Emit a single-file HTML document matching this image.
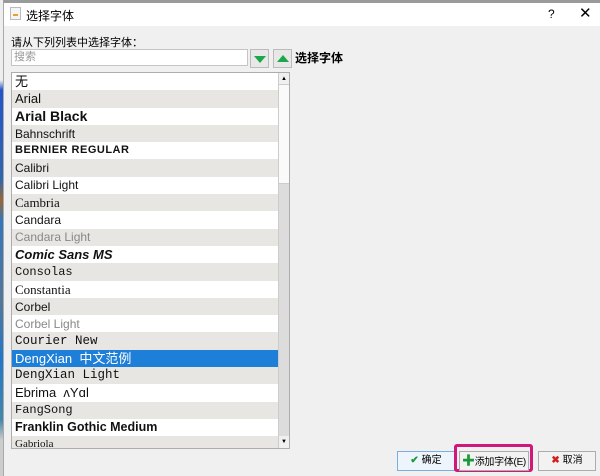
<!DOCTYPE html>
<html><head><meta charset="utf-8"><style>
*{margin:0;padding:0;box-sizing:border-box}
body{width:600px;height:476px;overflow:hidden;background:#f0f0f0;font-family:"Liberation Sans","Noto Sans CJK SC",sans-serif;position:relative}
.strip{position:absolute;left:0;top:0;width:3px;height:476px;background:linear-gradient(#eee 0,#eee 80px,#2255cc 90px,#3366aa 180px,#996633 200px,#3377bb 220px,#557799 300px,#2277cc 360px,#4488aa 420px,#ccc 440px)}
.win{position:absolute;left:3px;top:0;width:597px;height:476px;border-top:3px solid #9a9a9a;border-left:1px solid #aaa;background:#f0f0f0}
.title{position:absolute;left:0;top:0;right:0;height:23px;background:#fff;font-size:12px}
.abs{position:absolute}
.list{position:absolute;left:7px;top:69px;width:279px;height:377px;border:1px solid #adadad;background:#fff;overflow:hidden}
.row{height:17.3px;display:flex;align-items:center;overflow:hidden;padding-left:3px;font-size:13px;color:#111;white-space:nowrap;width:266px;line-height:1}
.row:nth-child(even){background:#e8e6e3}
.sel{background:#1e7fd8!important;color:#fff!important}
.sb{position:absolute;left:266px;top:0;width:11px;height:375px;background:#dcdcdc;border-left:1px solid #ccc}
.btn{position:absolute;top:448px;height:20px;border:1px solid #acacac;background:#f2f2f2;font-size:10px;line-height:18px;text-align:center;white-space:nowrap}
</style></head><body>
<div class="strip"></div>
<div class="win">
 <div class="title">
  <div class="abs" style="left:6px;top:4px;width:11px;height:13px;border:1px solid #bbb;background:#f5f5f5"><div style="margin:6px 2px 0;height:2px;background:#e8a030"></div></div>
  <div class="abs" style="left:22px;top:4px">选择字体</div>
  <div class="abs" style="left:544px;top:4px;font-size:12px">?</div>
  <div class="abs" style="left:575px;top:1px;font-size:15px">✕</div>
 </div>
 <div class="abs" style="left:7px;top:31px;font-size:11px">请从下列列表中选择字体：</div>
 <div class="abs" style="left:7px;top:46px;width:237px;height:17px;background:#fff;border:1px solid #c4c4c4;font-size:11px;color:#999;padding-left:2px;line-height:15px">搜索</div>
 <div class="abs" style="left:246px;top:46px;width:19px;height:19px;border:1px solid #bbb;background:#e8e8e8"><div style="margin:6px auto 0;width:0;height:0;border-left:6px solid transparent;border-right:6px solid transparent;border-top:7px solid #1ca84a"></div></div>
 <div class="abs" style="left:269px;top:46px;width:19px;height:19px;border:1px solid #bbb;background:#e8e8e8"><div style="margin:5px auto 0;width:0;height:0;border-left:6px solid transparent;border-right:6px solid transparent;border-bottom:7px solid #1ca84a"></div></div>
 <div class="abs" style="left:291px;top:46px;font-size:12px;font-weight:bold">选择字体</div>
 <div class="list">
  <div class="row">无</div>
  <div class="row">Arial</div>
  <div class="row" style="font-weight:900;font-size:14px">Arial Black</div>
  <div class="row" style="font-size:12px">Bahnschrift</div>
  <div class="row" style="font-weight:bold;font-size:11px;letter-spacing:.5px">BERNIER REGULAR</div>
  <div class="row" style="font-size:12px">Calibri</div>
  <div class="row" style="font-size:12px">Calibri Light</div>
  <div class="row" style="font-family:'Liberation Serif',serif">Cambria</div>
  <div class="row" style="font-size:12px">Candara</div>
  <div class="row" style="font-size:12px;color:#888">Candara Light</div>
  <div class="row" style="font-weight:bold;font-style:italic">Comic Sans MS</div>
  <div class="row" style="font-family:'Liberation Mono',monospace;font-size:12px">Consolas</div>
  <div class="row" style="font-family:'Liberation Serif',serif">Constantia</div>
  <div class="row" style="font-size:12px">Corbel</div>
  <div class="row" style="font-size:12px;color:#888">Corbel Light</div>
  <div class="row" style="font-family:'Liberation Mono',monospace;font-size:12.5px">Courier New</div>
  <div class="row sel">DengXian&nbsp; 中文范例</div>
  <div class="row" style="font-family:'Liberation Mono',monospace;font-size:12.5px">DengXian Light</div>
  <div class="row">Ebrima&nbsp; ʌYɑǀ</div>
  <div class="row" style="font-family:'Liberation Mono',monospace;font-size:12px">FangSong</div>
  <div class="row" style="font-weight:bold;font-size:12.5px">Franklin Gothic Medium</div>
  <div class="row" style="font-family:'Liberation Serif',serif;font-size:11px">Gabriola</div>
  <div class="sb">
   <div style="height:12px;background:#f0f0f0;border-bottom:1px solid #ccc;font-size:6px;text-align:center;line-height:12px">▲</div>
   <div style="height:99px;background:#fafafa;border-bottom:1px solid #ccc"></div>
   <div style="position:absolute;bottom:0;width:10px;height:12px;background:#f0f0f0;font-size:6px;text-align:center;line-height:12px">▼</div>
  </div>
 </div>
 <div class="btn" style="left:393px;width:58px;border-color:#7aaedd;background:#eef4fb"><span style="color:#1a9a3a;font-weight:bold">✔</span> 确定</div>
 <div class="abs" style="left:450px;top:441px;width:79px;height:28px;border:3px solid #d0177a;border-radius:3px"></div>
 <div class="btn" style="left:455px;width:70px;top:448px;letter-spacing:-0.3px"><span style="color:#1a9a3a;font-weight:bold;font-size:13px">✚</span>添加字体(E)</div>
 <div class="btn" style="left:534px;width:58px"><span style="color:#d02020;font-weight:bold">✖</span> 取消</div>
</div>
</body></html>
